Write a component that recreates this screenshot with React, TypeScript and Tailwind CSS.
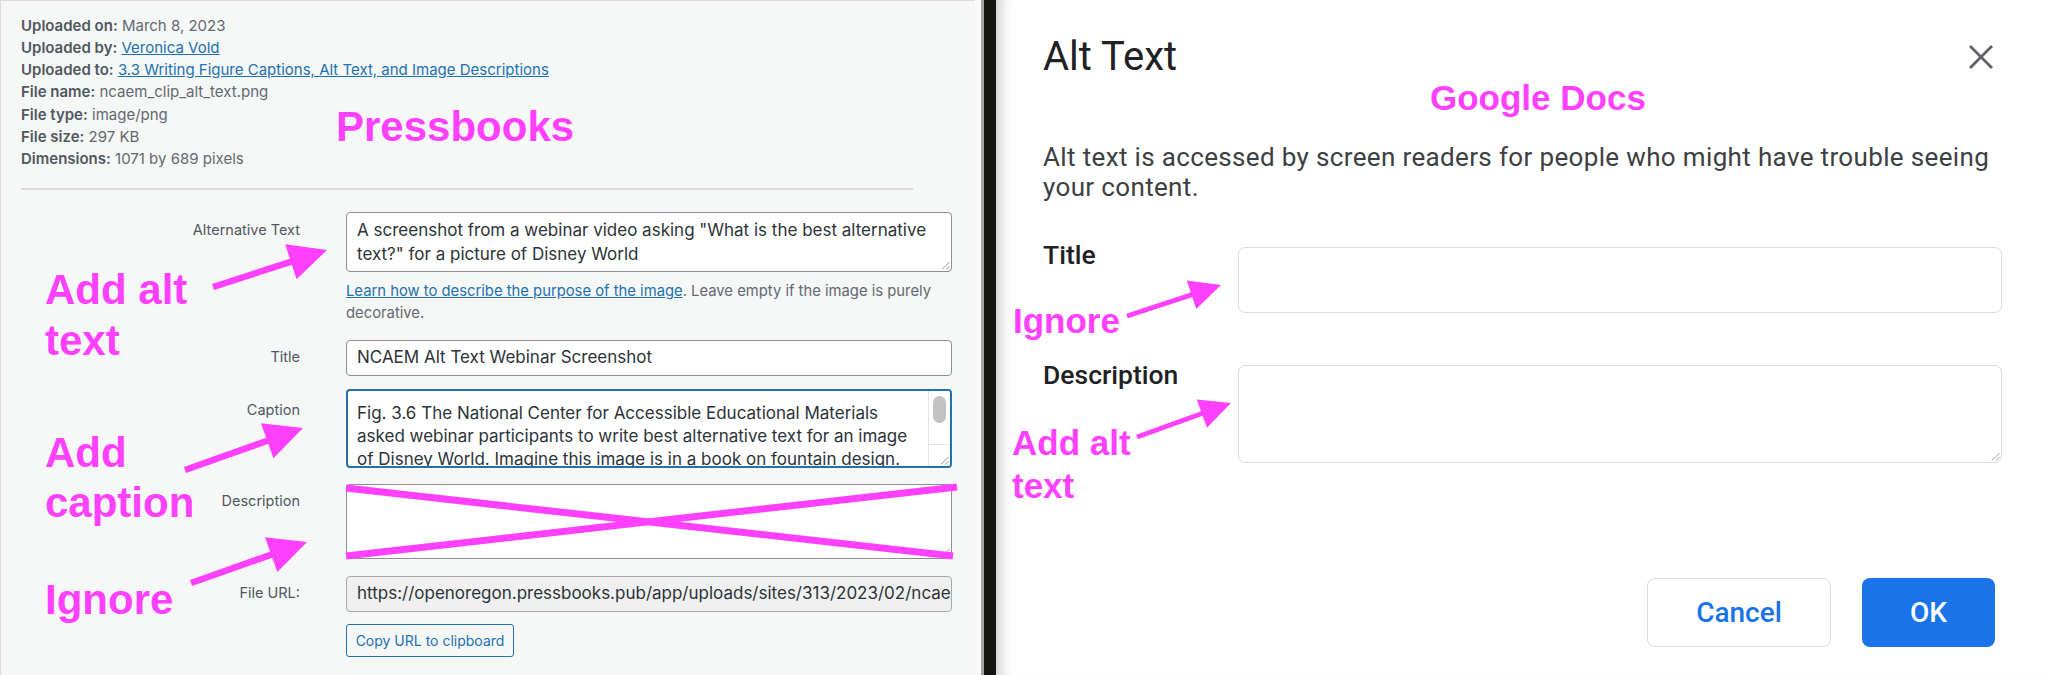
import { FC, ReactNode } from "react";

type Pt = [number, number];

interface ArrowProps {
  from: Pt;
  to: Pt;
  head: number;
  half: number;
  stroke: number;
}

// straight magenta arrow, triangle head at "to"
const Arrow: FC<ArrowProps> = ({ from, to, head, half, stroke }) => {
  const dx = to[0] - from[0];
  const dy = to[1] - from[1];
  const len = Math.hypot(dx, dy);
  const ux = dx / len;
  const uy = dy / len;
  const bx = to[0] - ux * head;
  const by = to[1] - uy * head;
  const pts = `${to[0]},${to[1]} ${bx - uy * half},${by + ux * half} ${bx + uy * half},${by - ux * half}`;
  return (
    <g fill="#ff40ff" stroke="none">
      <line
        x1={from[0]}
        y1={from[1]}
        x2={bx + ux * 3}
        y2={by + uy * 3}
        stroke="#ff40ff"
        strokeWidth={stroke}
      />
      <polygon points={pts} />
    </g>
  );
};

const Grip: FC<{ className?: string; color?: string }> = ({ className, color = "#8c8f94" }) => (
  <svg className={className} width="10" height="10" viewBox="0 0 10 10">
    <path d="M9.5 2 L2 9.5 M9.5 6 L6 9.5" stroke={color} strokeWidth="1" fill="none" />
  </svg>
);

const meta: [string, ReactNode][] = [
  ["Uploaded on:", "March 8, 2023"],
  ["Uploaded by:", <a className="text-[#2271b1] underline">Veronica Vold</a>],
  [
    "Uploaded to:",
    <a className="text-[#2271b1] underline">
      3.3 Writing Figure Captions, Alt Text, and Image Descriptions
    </a>,
  ],
  ["File name:", "ncaem_clip_alt_text.png"],
  ["File type:", "image/png"],
  ["File size:", "297 KB"],
  ["Dimensions:", "1071 by 689 pixels"],
];

const FieldLabel: FC<{ children: ReactNode; pt: string }> = ({ children, pt }) => (
  <div className={`w-[299px] shrink-0 text-right text-[14.5px] leading-[20px] text-[#50575e] ${pt}`}>
    {children}
  </div>
);

const PressbooksPanel: FC = () => {
  return (
    <div className="flex w-[975px] shrink-0 flex-col border-l border-t border-[#dcdcde] bg-[#f6f7f7] font-['Inter',sans-serif]">
      <div className="pl-[20px] pt-[13.5px] text-[15px] leading-[22.3px] text-[#646970]">
        {meta.map(([label, value]) => (
          <div key={label}>
            <span className="font-semibold text-[#50575e]">{label}</span> {value}
          </div>
        ))}
      </div>
      <div className="ml-[20px] mt-[17.5px] h-[2px] w-[892px] bg-[#dcdcde]" />

      <div className="mt-[22px] flex flex-col">
        <div className="flex">
          <FieldLabel pt="pt-[8px]">Alternative Text</FieldLabel>
          <div className="ml-[46px] w-[606px]">
            <div className="relative h-[60px] rounded-[4px] border border-[#8c8f94] bg-white px-[10px] pt-[5px] text-[17px] leading-[24.3px] text-[#2c3338]">
              <div className="whitespace-nowrap">
                A screenshot from a webinar video asking "What is the best alternative
              </div>
              <div className="whitespace-nowrap">text?" for a picture of Disney World</div>
              <Grip className="absolute bottom-[1px] right-[1px]" />
            </div>
            <div className="mt-[8px] text-[14.8px] leading-[22px] text-[#646970]">
              <div className="whitespace-nowrap">
                <a className="text-[#2271b1] underline">Learn how to describe the purpose of the image</a>
                . Leave empty if the image is purely
              </div>
              <div>decorative.</div>
            </div>
          </div>
        </div>

        <div className="mt-[16px] flex">
          <FieldLabel pt="pt-[7px]">Title</FieldLabel>
          <div className="ml-[46px] flex h-[36px] w-[606px] items-center rounded-[4px] border border-[#8c8f94] bg-white px-[10px] text-[17px] text-[#2c3338]">
            NCAEM Alt Text Webinar Screenshot
          </div>
        </div>

        <div className="mt-[13px] flex">
          <FieldLabel pt="pt-[11px]">Caption</FieldLabel>
          <div className="relative ml-[46px] flex h-[79px] w-[606px] overflow-hidden rounded-[4px] border-2 border-[#2271b1] bg-white">
            <div className="flex-1 overflow-hidden pl-[9px] pt-[10.5px] text-[17px] leading-[23px] text-[#2c3338]">
              <div className="whitespace-nowrap">Fig. 3.6 The National Center for Accessible Educational Materials</div>
              <div className="whitespace-nowrap">asked webinar participants to write best alternative text for an image</div>
              <div className="whitespace-nowrap">of Disney World. Imagine this image is in a book on fountain design.</div>
            </div>
            <div className="flex w-[22px] shrink-0 flex-col border-l border-[#e3e3e3] bg-white">
              <div className="mx-auto mt-[5px] h-[27px] w-[13px] rounded-full bg-[#c2c2c2]" />
              <div className="mt-auto h-[22px] border-t border-[#e3e3e3]" />
            </div>
            <Grip className="absolute bottom-[1px] right-[1px]" />
          </div>
        </div>

        <div className="mt-[16px] flex">
          <FieldLabel pt="pt-[7px]">Description</FieldLabel>
          <div className="relative ml-[46px] h-[75px] w-[606px] rounded-[4px] border border-[#8c8f94] bg-white">
            <Grip className="absolute bottom-[1px] right-[1px]" />
          </div>
        </div>

        <div className="mt-[17px] flex">
          <FieldLabel pt="pt-[7px]">File URL:</FieldLabel>
          <div className="ml-[46px] w-[606px]">
            <div className="flex h-[36px] items-center overflow-hidden whitespace-nowrap rounded-[4px] border border-[#a7aaad] bg-[#f0f0f1] px-[10px] text-[17px] text-[#2c3338]">
              https://openoregon.pressbooks.pub/app/uploads/sites/313/2023/02/ncaem_clip_alt_text.png
            </div>
            <button className="mt-[12px] h-[33px] w-[168px] rounded-[3px] border border-[#2271b1] bg-[#f6f7f7] text-[14px] text-[#2271b1]">
              Copy URL to clipboard
            </button>
          </div>
        </div>
      </div>
    </div>
  );
};

const DocsPanel: FC = () => {
  return (
    <div className="flex flex-1 flex-col bg-white pl-[47px] pr-[46px] font-['Roboto',sans-serif] shadow-[inset_16px_0_14px_-12px_rgba(0,0,0,0.22)]">
      <div className="flex items-center justify-between pt-[33px]">
        <h2 className="text-[40px] leading-[48px] text-[#202124]">Alt Text</h2>
        <svg className="mr-[8px]" width="26" height="26" viewBox="0 0 26 26">
          <path d="M2 2 L24 24 M24 2 L2 24" stroke="#5f6368" strokeWidth="2.8" />
        </svg>
      </div>
      <p className="mt-[61px] text-[26px] leading-[30px] tracking-[0.35px] text-[#3c4043]">
        Alt text is accessed by screen readers for people who might have trouble seeing
        <br />
        your content.
      </p>

      <div className="mt-[45px] flex">
        <div className="-mt-[7px] w-[195px] shrink-0 text-[26.5px] font-medium leading-[30px] text-[#202124]">
          Title
        </div>
        <div className="h-[66px] flex-1 rounded-[7px] border border-[#dadce0]" />
      </div>

      <div className="mt-[52px] flex">
        <div className="-mt-[5px] w-[195px] shrink-0 text-[26.5px] font-medium leading-[30px] text-[#202124]">
          Description
        </div>
        <div className="relative h-[98px] flex-1 rounded-[7px] border border-[#dadce0]">
          <Grip className="absolute bottom-[1px] right-[1px]" color="#9aa0a6" />
        </div>
      </div>

      <div className="mr-[7px] mt-[115px] flex justify-end gap-[31px]">
        <button className="h-[69px] w-[184px] rounded-[8px] border border-[#dadce0] bg-white text-[28px] font-medium text-[#1a73e8]">
          Cancel
        </button>
        <button className="h-[69px] w-[133px] rounded-[8px] bg-[#1a73e8] text-[28px] font-medium text-white">
          OK
        </button>
      </div>
    </div>
  );
};

const Note: FC<{ className: string; children: ReactNode }> = ({ className, children }) => (
  <div className={`pointer-events-none absolute whitespace-nowrap font-['Liberation_Sans',Arial,sans-serif] font-bold text-[#ff40ff] ${className}`}>
    {children}
  </div>
);

export default function App() {
  return (
    <div className="relative flex h-[675px] w-[2048px] overflow-hidden bg-white">
      <PressbooksPanel />
      <div className="w-[6px] shrink-0 bg-[#fafafa]" />
      <div className="w-[3px] shrink-0 bg-[#a3a3a3]" />
      <div className="w-[12px] shrink-0 bg-[#141412]" />
      <DocsPanel />

      {/* annotations drawn over the screenshots */}
      <Note className="left-[336px] top-[102px] text-[42px] leading-[50px]">Pressbooks</Note>
      <Note className="left-[45px] top-[264px] text-[42px] leading-[51px]">
        Add alt
        <br />
        text
      </Note>
      <Note className="left-[45px] top-[428px] text-[42px] leading-[50px]">
        Add
        <br />
        caption
      </Note>
      <Note className="left-[45px] top-[575px] text-[42px] leading-[50px]">Ignore</Note>
      <Note className="left-[1430px] top-[76px] text-[35px] leading-[43px]">Google Docs</Note>
      <Note className="left-[1013px] top-[299px] text-[35px] leading-[43px]">Ignore</Note>
      <Note className="left-[1012px] top-[421px] text-[35px] leading-[43px]">
        Add alt
        <br />
        text
      </Note>

      <svg className="pointer-events-none absolute left-0 top-0" width="2048" height="675">
        <Arrow from={[213, 287]} to={[327, 250]} head={38} half={18.5} stroke={6.5} />
        <Arrow from={[185, 470]} to={[303, 428]} head={38} half={18.5} stroke={6.5} />
        <Arrow from={[191, 583]} to={[307, 542]} head={38} half={18.5} stroke={6.5} />
        <Arrow from={[1127, 316]} to={[1221, 285]} head={31} half={15} stroke={5} />
        <Arrow from={[1137, 437]} to={[1231, 403]} head={31} half={15} stroke={5} />
        <line x1={346} y1={488} x2={953} y2={556} stroke="#ff40ff" strokeWidth={7} />
        <line x1={346} y1={556} x2={957} y2={487} stroke="#ff40ff" strokeWidth={7} />
      </svg>
    </div>
  );
}
